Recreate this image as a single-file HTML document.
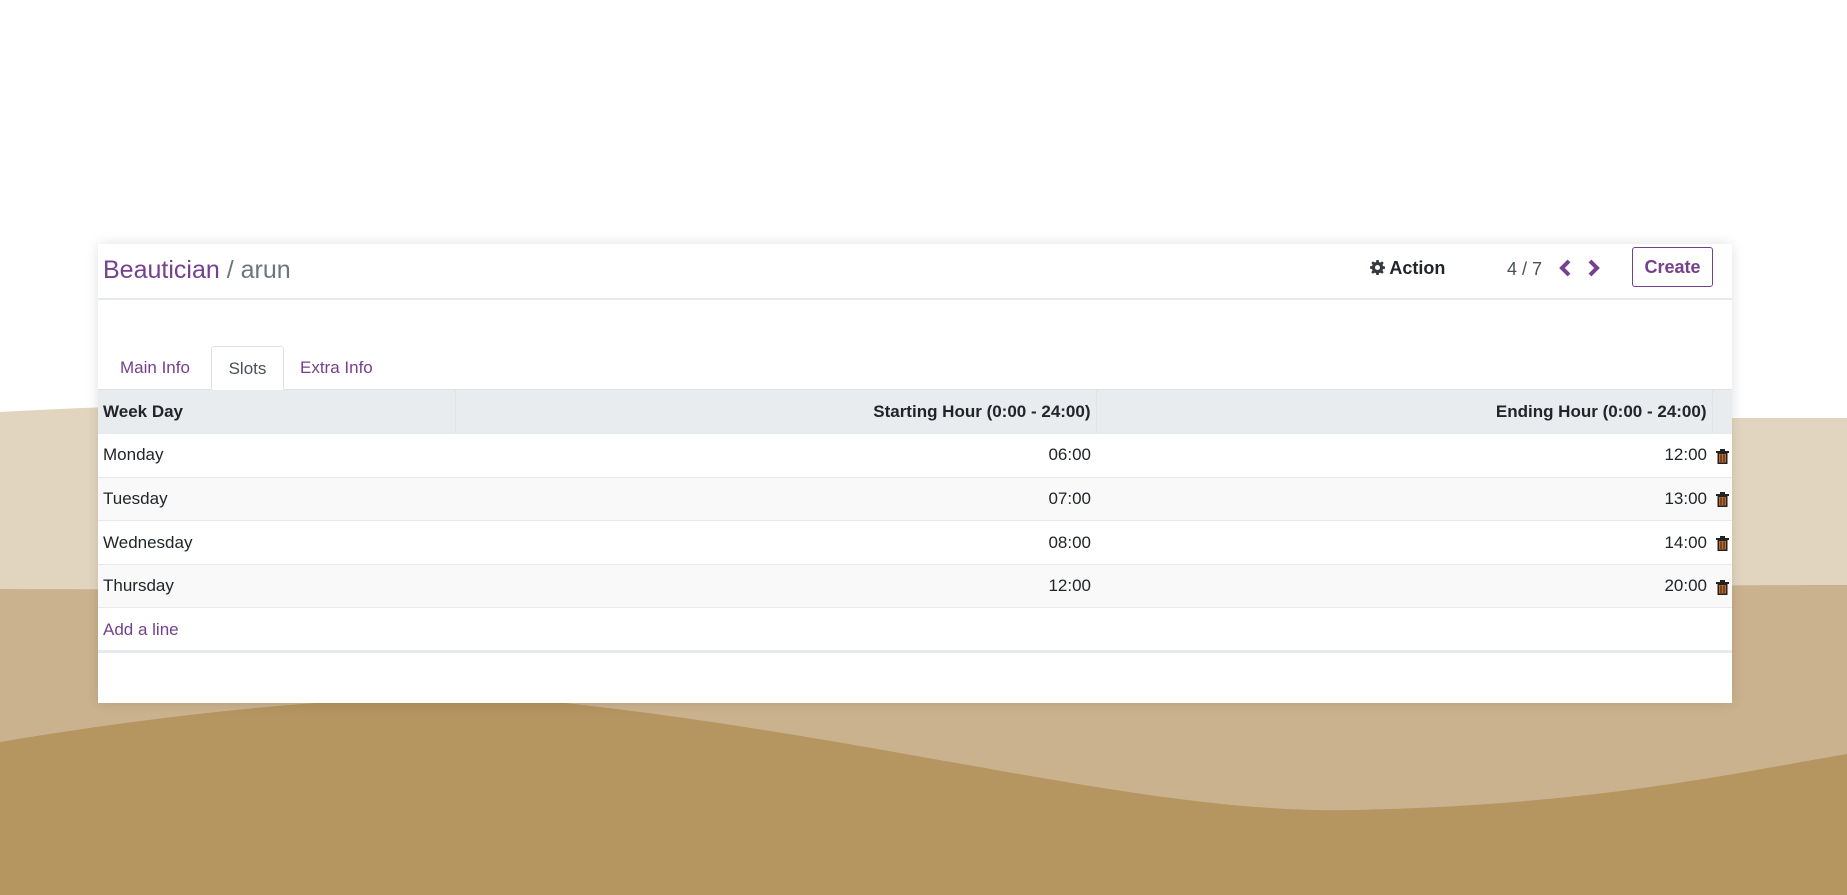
<!DOCTYPE html>
<html><head><meta charset="utf-8"><style>
*{box-sizing:border-box;margin:0;padding:0}
body{width:1847px;height:895px;position:relative;overflow:hidden;background:#fff;font-family:"Liberation Sans","DejaVu Sans",sans-serif;color:#212529;font-size:17px}
svg.bg{position:absolute;left:0;top:0}
.card{position:absolute;left:98px;top:244px;width:1634px;height:459px;background:#fff;box-shadow:0 0 12px rgba(0,0,0,.12)}
.hdr{position:absolute;left:0;top:0;width:100%;height:56px;border-bottom:2px solid #e6e9ee}
.title{position:absolute;left:5px;top:12px;font-size:25px;color:#74408f}
.title span{color:#6c757d}
.action{position:absolute;left:1272px;top:14px;font-size:18px;color:#212529;font-weight:bold}
.pager{position:absolute;left:1409px;top:15px;font-size:18px;color:#495057}
.chev{position:absolute;top:14px}
.create{position:absolute;left:1534px;top:3px;width:81px;height:40px;border:1px solid #74408f;border-radius:3px;color:#74408f;font-size:18px;text-align:center;line-height:38px;font-weight:bold}
.tabs{position:absolute;left:0;top:102px;width:100%;height:44px;border-bottom:1px solid #dee2e6}
.tab{position:absolute;top:0;height:44px;line-height:44px;font-size:17px;color:#74408f}
.tab.act{left:113px;width:73px;border:1px solid #dee2e6;border-bottom:1px solid #fff;border-radius:3px 3px 0 0;color:#495057;text-align:center;background:#fff;height:45px}
table{position:absolute;left:0;top:146px;width:1634px;border-collapse:collapse;table-layout:fixed}
td,th{height:43.6px;padding:0 5px;font-size:17px;border-bottom:1px solid #e6e9ee}
th{background:#e9ecef;font-weight:bold;text-align:left}
th.r,td.r{text-align:right}
td.t,th.t{padding:0 0 0 4px;text-align:left}
td.t svg{display:block;margin-top:2px}
tr.s td{background:#f9f9f9}
.sep{border-left:1px solid #dfe2e6}
.add{color:#74408f}
.foot{position:absolute;left:0;top:406px;width:100%;height:3px;background:#e6e9ee}
</style></head><body>
<svg class="bg" width="1847" height="895" viewBox="0 0 1847 895">
<path d="M0,412 C300,395 700,400 1100,410 C1500,418 1700,418 1847,418 V895 H0Z" fill="#e2d5bf"/>
<path d="M0,589 C400,590 900,595 1300,590 C1600,586 1750,585 1847,585 V895 H0Z" fill="#cbb28e"/>
<path d="M0,742 C250,700 450,690 565,703 C900,740 1150,815 1355,810 C1600,805 1750,770 1847,754 V895 H0Z" fill="#b59560"/>
</svg>
<div class="card">
 <div class="hdr">
  <div class="title">Beautician <span>/ arun</span></div>
  <div class="action"><svg width="15" height="15" viewBox="0 0 16 16" style="vertical-align:-1px"><path fill="#343a40" d="M6.8 0h2.4l.4 2.2 1.4.6 1.9-1.3 1.7 1.7-1.3 1.9.6 1.4 2.2.4v2.4l-2.2.4-.6 1.4 1.3 1.9-1.7 1.7-1.9-1.3-1.4.6-.4 2.2H6.8l-.4-2.2-1.4-.6-1.9 1.3-1.7-1.7 1.3-1.9-.6-1.4L0 9.2V6.8l2.2-.4.6-1.4-1.3-1.9 1.7-1.7 1.9 1.3 1.4-.6zM8 5.3A2.7 2.7 0 1 0 8 10.7 2.7 2.7 0 1 0 8 5.3z"/></svg> Action</div>
  <div class="pager">4 / 7</div>
  <svg class="chev" style="left:1460px" width="14" height="20" viewBox="0 0 14 20"><path d="M11 3 L4 10 L11 17" stroke="#74408f" stroke-width="4" fill="none"/></svg>
  <svg class="chev" style="left:1489px" width="14" height="20" viewBox="0 0 14 20"><path d="M3 3 L10 10 L3 17" stroke="#74408f" stroke-width="4" fill="none"/></svg>
  <div class="create">Create</div>
 </div>
 <div class="tabs">
  <div class="tab" style="left:22px">Main Info</div>
  <div class="tab act">Slots</div>
  <div class="tab" style="left:202px">Extra Info</div>
 </div>
 <table>
  <colgroup><col style="width:357px"><col style="width:641px"><col style="width:616px"><col style="width:20px"></colgroup>
  <tr><th>Week Day</th><th class="r sep">Starting Hour (0:00 - 24:00)</th><th class="r sep">Ending Hour (0:00 - 24:00)</th><th class="sep t"></th></tr>
  <tr><td>Monday</td><td class="r">06:00</td><td class="r">12:00</td><td class="t"><svg width="13" height="15" viewBox="0 0 13 15"><rect x="0" y="2" width="13" height="2" fill="#222"/><rect x="4" y="0" width="5" height="2" fill="#222"/><rect x="1.5" y="4" width="10" height="11" fill="#222"/><rect x="3" y="5" width="7" height="8.5" fill="#c46a2a"/><rect x="4.5" y="5.5" width="1" height="7.5" fill="#222"/><rect x="7.5" y="5.5" width="1" height="7.5" fill="#222"/></svg></td></tr>
  <tr class="s"><td>Tuesday</td><td class="r">07:00</td><td class="r">13:00</td><td class="t"><svg width="13" height="15" viewBox="0 0 13 15"><rect x="0" y="2" width="13" height="2" fill="#222"/><rect x="4" y="0" width="5" height="2" fill="#222"/><rect x="1.5" y="4" width="10" height="11" fill="#222"/><rect x="3" y="5" width="7" height="8.5" fill="#c46a2a"/><rect x="4.5" y="5.5" width="1" height="7.5" fill="#222"/><rect x="7.5" y="5.5" width="1" height="7.5" fill="#222"/></svg></td></tr>
  <tr><td>Wednesday</td><td class="r">08:00</td><td class="r">14:00</td><td class="t"><svg width="13" height="15" viewBox="0 0 13 15"><rect x="0" y="2" width="13" height="2" fill="#222"/><rect x="4" y="0" width="5" height="2" fill="#222"/><rect x="1.5" y="4" width="10" height="11" fill="#222"/><rect x="3" y="5" width="7" height="8.5" fill="#c46a2a"/><rect x="4.5" y="5.5" width="1" height="7.5" fill="#222"/><rect x="7.5" y="5.5" width="1" height="7.5" fill="#222"/></svg></td></tr>
  <tr class="s"><td>Thursday</td><td class="r">12:00</td><td class="r">20:00</td><td class="t"><svg width="13" height="15" viewBox="0 0 13 15"><rect x="0" y="2" width="13" height="2" fill="#222"/><rect x="4" y="0" width="5" height="2" fill="#222"/><rect x="1.5" y="4" width="10" height="11" fill="#222"/><rect x="3" y="5" width="7" height="8.5" fill="#c46a2a"/><rect x="4.5" y="5.5" width="1" height="7.5" fill="#222"/><rect x="7.5" y="5.5" width="1" height="7.5" fill="#222"/></svg></td></tr>
  <tr><td class="add" style="border:none">Add a line</td><td style="border:none"></td><td style="border:none"></td><td style="border:none"></td></tr>
 </table>
 <div class="foot"></div>
</div>
</body></html>
